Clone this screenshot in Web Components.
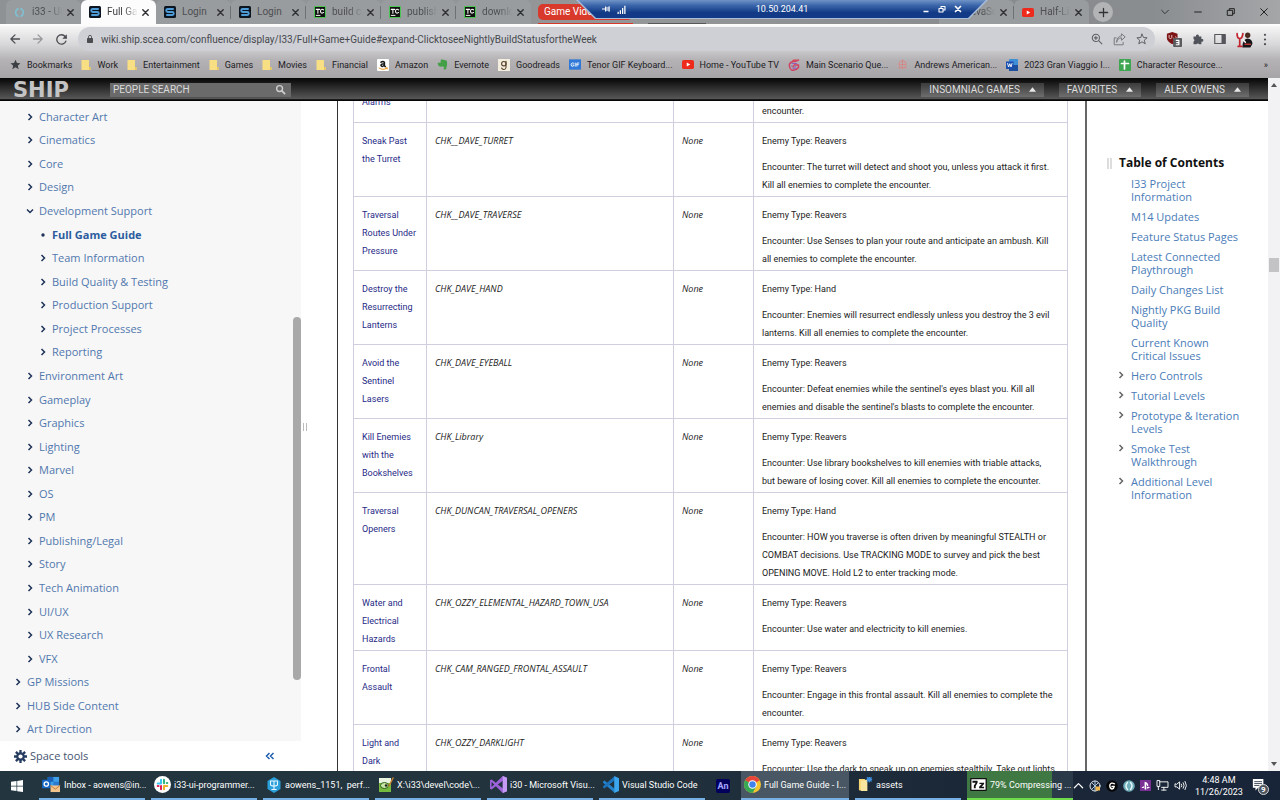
<!DOCTYPE html>
<html lang="en">
<head>
<meta charset="utf-8">
<title>Full Game Guide - I33</title>
<style>
  html, body { margin: 0; height: 100%; }
  body { font-family: "Open Sans", "Noto Sans", sans-serif; font-size: 11px; overflow: hidden; background: #fff; color: #222; }
</style>
</head>
<body>
<app-screen></app-screen>

<script>
const svg = (vb, body, w = 12, h = w) =>
  `<svg viewBox="0 0 ${vb}" width="${w}" height="${h}" fill="none" stroke-linecap="round" stroke-linejoin="round" aria-hidden="true">${body}</svg>`;

const icons = {
  ring: svg('16 16', '<path d="M6 2.5A6 6 0 0 0 6 13.5M10 13.5A6 6 0 0 0 10 2.5" stroke="#7fc0d2" stroke-width="2.2"/>', 11),
  ship: svg('16 16', '<rect width="16" height="16" rx="2" fill="#0c1420"/><path d="M13 4H5Q3 4 3 6T5 8H11Q13 8 13 10T11 12H3" stroke="#4f9bd6" stroke-width="2.6" stroke-linecap="butt"/>', 12),
  tc: svg('16 16', '<rect x=".7" y=".7" width="14.6" height="14.6" rx="1" fill="#111" stroke="#4bc653" stroke-width="1.4"/><path d="M3 4.5H7.5M5.2 4.5V9.5M12.8 5.3Q11.5 4 10 4.5Q8.7 5 8.7 7T10 9.4Q11.5 9.8 12.8 8.6" stroke="#fff" stroke-width="1.4"/><path d="M3 12.5H8" stroke="#fff" stroke-width="1.3"/>', 12),
  yt: svg('16 12', '<rect width="16" height="12" rx="2.5" fill="#ee2a1d"/><path d="M6.3 3.4v5.2L11 6z" fill="#fff"/>', 12, 9),
  x: svg('10 10', '<path d="M2 2l6 6M8 2l-6 6" stroke="currentColor" stroke-width="1.6"/>', 9),
  plus: svg('12 12', '<path d="M6 1.5v9M1.5 6h9" stroke="#333" stroke-width="1.4"/>', 11),
  vee: svg('12 12', '<path d="M2 4l4 4 4-4" stroke="#333" stroke-width="1.2"/>', 10),
  min: svg('12 12', '<path d="M2 6h8" stroke="#222" stroke-width="1.3"/>', 10),
  max: svg('12 12', '<path d="M2 4h6v6H2zM4 4V2h6v6H8" stroke="#222" stroke-width="1.2"/>', 10),
  close: svg('12 12', '<path d="M2 2l8 8M10 2l-8 8" stroke="#222" stroke-width="1.2"/>', 10),
  back: svg('16 16', '<path d="M14 8H2.5M8 2.5L2.5 8 8 13.5" stroke="#4c4d51" stroke-width="1.7"/>', 12),
  fwd: svg('16 16', '<path d="M2 8h11.5M8 2.5L13.5 8 8 13.5" stroke="#96979b" stroke-width="1.7"/>', 12),
  reload: svg('16 16', '<path d="M13.4 10A5.8 5.8 0 1 1 12.5 4.3L13.8 6" stroke="#4c4d51" stroke-width="1.7"/><path d="M14.5 1.5V7H9z" fill="#4c4d51"/>', 13),
  lock: svg('12 14', '<rect x="1.5" y="5.5" width="9" height="7.5" rx="1" fill="#4c4d51"/><path d="M3.7 5.5V3.8a2.3 2.3 0 0 1 4.6 0V5.5" stroke="#4c4d51" stroke-width="1.3"/>', 8, 10),
  zoom: svg('16 16', '<circle cx="6.5" cy="6.5" r="4.8" stroke="#5d5e63" stroke-width="1.4"/><path d="M10.2 10.2L14.5 14.5M4.5 6.5h4M6.5 4.5v4" stroke="#5d5e63" stroke-width="1.4"/>', 12),
  share: svg('16 16', '<path d="M4 6H1.5v8.500h11v-3M4.500 11Q5.5 6 10.5 6V9L15 4.8 10.5 1V3.5Q5 4 4.500 11z" stroke="#77787c" stroke-width="1.2"/>', 13),
  starO: svg('16 16', '<path d="M8 1.5l2 4.5 4.8.4-3.7 3.2 1.2 4.8L8 11.8l-4.3 2.6 1.2-4.8L1.2 6.4 6 6z" stroke="#5d5e63" stroke-width="1.3"/>', 12),
  star: svg('16 16', '<path d="M8 1l2.2 4.8 5 .5-3.8 3.5 1.2 5L8 12.1l-4.6 2.7 1.2-5L.8 6.3l5-.5z" fill="#3c4044"/>', 11),
  shield: svg('18 18', '<path d="M7 1L13 3V8Q13 12 7 15Q1 12 1 8V3z" fill="#7d1416"/><path d="M3.500 5v2.500a1.600 1.600 0 0 0 3 0V5M8.500 8a1.500 1.500 0 1 0 2.500-1.500" stroke="#e6c9c9" stroke-width="1.100"/><rect x="8" y="8" width="10" height="10" rx="1" fill="#5a5b5f"/><path d="M11.500 10.500h3v5h-3M12 13h2.500" stroke="#fff" stroke-width="1.300"/>', 16),
  puzzle: svg('16 16', '<path d="M2 4.500H5.500A1.900 1.900 0 1 1 9 4.500H12.500V8A1.900 1.900 0 1 1 12.500 11.500V15H9.500A1.900 1.900 0 0 0 6 15H2V11.500A1.900 1.900 0 0 0 2 8z" fill="#50535a"/>', 12),
  panel: svg('16 16', '<rect x="1" y="2" width="14" height="12" stroke="#55565b" stroke-width="1.500"/><path d="M10 2h5v12h-5z" fill="#55565b"/>', 12),
  avatar: svg('16 16', '<circle cx="11" cy="4" r="2.500" fill="#4a2b20"/><path d="M6 15.500Q6 8 10.500 7Q15.500 7.500 15.500 12L13.500 15.500z" fill="#16161a"/><path d="M1 2.500Q1 7 3.500 7T6.500 2.500M3.500 7V14M2 14.500H5.500" stroke="#c3242d" stroke-width="1.600"/><path d="M3.800 1v4.500M6.800 8.500l2 2" stroke="#fff" stroke-width="1.400"/><path d="M8.500 12.500h5" stroke="#b93a35" stroke-width="1.400"/>', 17),
  dots: svg('4 14', '<g fill="#4c4d51"><circle cx="2" cy="2" r="1.200"/><circle cx="2" cy="7" r="1.200"/><circle cx="2" cy="12" r="1.200"/></g>', 4, 13),
  folder: svg('10 10', '<path d="M.500 0h7.500v7h1.500v3H.5z" fill="#f9df83"/><path d="M8 7h1.500v3H8z" fill="#e9c75c"/>', 10),
  amazon: svg('12 12', '<rect width="12" height="12" rx="1" fill="#fff"/><path d="M4 3.200Q6 1.700 7.400 3.200V6.800L8.300 7.600M7.300 4.800Q4 4.600 4 6.500Q4.800 8.400 7.300 6.300" stroke="#181818" stroke-width="1.500"/><path d="M2 9Q6 11.800 10 9M8.800 8.800H10.200V10" stroke="#ef9a25" stroke-width="1"/>', 12),
  evernote: svg('12 12', '<path d="M4 .8Q6 0 8 1.200Q10.800 1.500 11 3Q11.500 7 10 10.500Q9 12 7.200 11.300Q6.500 10 8 9.500L8 9Q6.500 9 6 8Q3.500 9 1.500 7Q.8 5 .8 4H3.500Q4 4 4 3.500z" fill="#43a047"/>', 11),
  goodreads: svg('12 12', '<rect width="12" height="12" fill="#f3eedd"/><circle cx="5.800" cy="4.700" r="2.200" stroke="#59432c" stroke-width="1.100"/><path d="M8 2.300V8.500Q7.500 10.800 5.700 10.500Q4 10.400 3.600 9" stroke="#59432c" stroke-width="1.100"/>', 12),
  tenor: svg('14 12', '<rect width="14" height="12" fill="#3179d8"/><path d="M5.500 4.500Q4 3.600 2.800 4.800Q2 6.500 3 7.800Q4.500 8.800 5.500 7.600V6.500H4.500M7.300 4.300V8M9.200 8V4.300H11.500M9.200 6.200H11" stroke="#fff" stroke-width="1"/>', 12, 11),
  rune: svg('12 12', '<path d="M10.500 1L7 2.500Q3 2 1.500 5Q.8 9 3.500 11Q8 11.800 10.500 8.500V6H7.500" stroke="#d0405f" stroke-width="1.500"/><path d="M4 4.500h4.500M3.500 7h4M5 9.200h3" stroke="#8c5fc0" stroke-width="1.200"/><path d="M5 1.500L8 .8M6.500 5.500L5 8" stroke="#d94a55" stroke-width="1.300"/>', 12),
  crest: svg('12 12', '<circle cx="6" cy="6" r="3.800" stroke="#d58d8c" stroke-width="1.300"/><path d="M6 .8v10M3.500 6h5M2 10l2-1M10 10L8 9" stroke="#d28786" stroke-width="1"/>', 11),
  word: svg('12 12', '<rect x="3" width="9" height="12" rx="1" fill="#3f8ed8"/><path d="M3 6h9v6H3z" fill="#1d4f9f"/><rect y="2.500" width="7.500" height="7.500" fill="#1a4eae"/><path d="M1.600 4.500l1 3.500 1.200-3.300L5 8l1-3.500" stroke="#fff" stroke-width=".9"/>', 12),
  sheet: svg('12 12', '<rect width="12" height="12" rx="1" fill="#3ea650"/><path d="M2.500 4.500h7M5.500 2v8" stroke="#fff" stroke-width="1.700"/>', 12),
  search: svg('12 12', '<circle cx="5" cy="5" r="3.200" stroke="#cfcfcf" stroke-width="1.500"/><path d="M7.500 7.500L10.500 10.500" stroke="#cfcfcf" stroke-width="1.900"/>', 11),
  up: svg('8 5', '<path d="M0 5L4 0 8 5z" fill="#e8e8e8"/>', 7, 5),
  chev: svg('8 8', '<path d="M2.500 1L5.500 4 2.500 7" stroke="currentColor" stroke-width="1.500" stroke-linecap="butt" stroke-linejoin="miter"/>', 8),
  chevDown: svg('8 8', '<path d="M1 2.500L4 5.500 7 2.500" stroke="currentColor" stroke-width="1.500" stroke-linecap="butt" stroke-linejoin="miter"/>', 8),
  dot: svg('8 8', '<circle cx="4" cy="4" r="1.700" fill="#1f3358"/>', 8),
  gear: svg('16 16', '<path d="M8 0v16M0 8h16M2.300 2.300l11.400 11.400M13.700 2.300L2.300 13.700" stroke="#263c60" stroke-width="2.800" stroke-linecap="butt"/><circle cx="8" cy="8" r="5.300" fill="#263c60"/><circle cx="8" cy="8" r="2.600" fill="#fff"/>', 13),
  pin: svg('14 10', '<path d="M0 5h5M5 1.500v7M5 3.500h5v3H5zM10 1v8" stroke="#fff" stroke-width="1.500" stroke-linecap="butt"/>', 10, 8),
  signal: svg('12 12', '<path d="M1.500 12V9M4.500 12V7M7.500 12V4M10.500 12V1" stroke="#fff" stroke-width="1.700" stroke-linecap="butt"/>', 9),
  rmin: svg('8 8', '<path d="M1.500 6.500h5" stroke="#fff" stroke-width="1.700" stroke-linecap="butt"/>', 8),
  rmax: svg('8 8', '<path d="M1 3.500h4v3.500H1zM3 3.500V1.500h4V5H5" stroke="#fff" stroke-width="1.100"/>', 8),
  rx: svg('8 8', '<path d="M1.500 1.500l5 5M6.500 1.500l-5 5" stroke="#fff" stroke-width="1.700"/>', 8),
  win: svg('12 12', '<path d="M0 1.800L5.500 1v4.700H0zM6.200.9L12 0v5.700H6.200zM0 6.400h5.500v4.700L0 10.300zM6.200 6.400H12V12l-5.800-.8z" fill="#fff"/>', 12),
  outlook: svg('20 18', '<path d="M6 1h12v10H6z" fill="#3fa0e8"/><path d="M6 1h6v5H6z" fill="#1a5fb4"/><path d="M12 6h6v5h-6z" fill="#2a7bd0"/><rect y="4" width="9" height="9" fill="#1467c4"/><circle cx="4.500" cy="8.500" r="2.300" stroke="#fff" stroke-width="1.400"/><path d="M9 10h10v7H9z" fill="#f3c58d"/><path d="M9 10l5 4 5-4" stroke="#c27a35" stroke-width="1"/>', 19, 17),
  slack: svg('16 16', '<circle cx="8" cy="8" r="8" fill="#fff"/><path d="M6.600 3.500V7" stroke="#36c5f0" stroke-width="1.900"/><path d="M3.500 7h2" stroke="#36c5f0" stroke-width="1.900"/><path d="M9.400 3.500V6.800M12.500 6.600h-.5" stroke="#2eb67d" stroke-width="1.900"/><path d="M9.400 9.400V12.500M9.400 9.400h3.100" stroke="#ecb22e" stroke-width="1.900"/><path d="M6.600 9.500v3M3.500 9.400h.8" stroke="#e01e5a" stroke-width="1.900"/>', 17),
  p4: svg('16 16', '<path d="M8 0l6.500 4v8L8 16l-6.500-4V4z" fill="#2b9fd9"/><path d="M4.500 4v3.500Q4.500 9 8 9T11.500 7.500V4zM8 9v3.500M5.800 12.500h4.400M8 4v5" stroke="#e8f6ff" stroke-width="1.100"/>', 16),
  npp: svg('16 16', '<path d="M1 1h12v14H1z" fill="#e9f3df"/><path d="M1 6h12v9H1z" fill="#75b93e"/><ellipse cx="6.500" cy="8.500" rx="4" ry="3" fill="#c7e7a4" stroke="#2f5f1c"/><circle cx="8" cy="8.500" r="1.200" fill="#222"/><path d="M15 1L11 9" stroke="#c4822f" stroke-width="1.500"/>', 16),
  vs: svg('16 16', '<path d="M12 0L5.500 6.300 1.500 3.300 0 4v8l1.500.7 4-3L12 16l4-1.700V1.700zM1.500 10.300V5.700L4 8zM7.300 8L12 4.400v7.200z" fill="#9c62da" fill-rule="evenodd"/><path d="M12 0l4 1.700v12.600L12 16z" fill="#c49af2"/>', 17),
  vsc: svg('16 16', '<path d="M1 5.200l1.300-1L12 12v4L1 6.300z" fill="#2382cc"/><path d="M1 10.800l1.300 1L12 4V0L1 9.700z" fill="#1c73bb"/><path d="M11.500 0L16 2v12l-4.500 2z" fill="#3ba5ee"/>', 17),
  chrome: svg('16 16', '<circle cx="8" cy="8" r="8" fill="#f4c430"/><path d="M8 8L1.100 4A8 8 0 0 1 14.900 4z" fill="#e5453a"/><path d="M8 8L1.100 4A8 8 0 0 0 8 16L11.500 10z" fill="#37a853"/><circle cx="8" cy="8" r="4" fill="#fff"/><circle cx="8" cy="8" r="3" fill="#3f82ee"/>', 17),
  exp: svg('16 16', '<path d="M1 2h6l2 2v11l-8-1z" fill="#f7d774"/><path d="M3 4l7-1v12H3z" fill="#fbe6a0"/><path d="M9.500 2.500h5M12 0v5M10 .8l4 3.400M14 .8l-4 3.400" stroke="#3f8fe0" stroke-width="1.500"/>', 15),
  zip: svg('18 14', '<rect x=".700" y=".700" width="16.600" height="12.600" fill="#fff" stroke="#111" stroke-width="1.400"/><path d="M2.500 3h5.500v2L6 8.500V11H4V8L6 5H2.500z" fill="#111"/><path d="M10 5h5v1.500L12.300 9.500H15V11H9.700V9.500L12.500 6.500H10z" fill="#111"/>', 17, 13),
  tray1: svg('12 12', '<circle cx="6" cy="6" r="5" stroke="#e8eef2" stroke-width="1"/><path d="M3 3l6 6M9 3L3 9M6 1v10" stroke="#a9c7dd" stroke-width="1"/><rect x="6.500" y="6.500" width="4.500" height="4" fill="#efb84c"/>', 12),
  tray2: svg('12 12', '<circle cx="6" cy="6" r="5.800" fill="#060606"/><path d="M8.500 3.800Q5 2 3.800 5Q3.500 8.500 6 9Q8 8.700 8.300 6.500H6" stroke="#fff" stroke-width="1.300"/>', 12),
  tray3: svg('12 12', '<circle cx="6" cy="6" r="5.800" fill="#71aebb"/><path d="M4.500 2.500Q1.500 6 4.500 9.500M7.500 2.500Q10.500 6 7.500 9.500" stroke="#e8f8fb" stroke-width="1.400"/>', 12),
  tray4: svg('12 12', '<rect width="12" height="12" fill="#7a2f93"/><path d="M5 2v8l1.800.6V4.500Q8.500 5 7.500 6.500Q10 7 8.500 4Q8 2.500 5 2zM4.300 6.800L2 7.800Q1.300 9 4.300 8.800zM7.500 7.500Q11 7 10.500 8.500L7.500 9.500z" fill="#fff"/>', 11),
  tray5: svg('14 12', '<path d="M4 2h9v6H6M8.500 8v3M6 11h5M1 1v6h3V1zM2.500 7v3.500" stroke="#fff" stroke-width="1"/>', 13, 11),
  tray6: svg('14 12', '<path d="M1 4.500v3h2L6 10V2L3 4.500z" stroke="#fff" stroke-width="1"/><path d="M8 4.500q1 1.500 0 3M10 3q2 3 0 6M12 1.500q3 4.500 0 9" stroke="#fff" stroke-width="1"/>', 13, 11),
  trayUp: svg('12 12', '<path d="M1.500 8.500L6 4l4.500 4.500" stroke="#fff" stroke-width="1.300"/>', 11),
  note: svg('16 16', '<path d="M1 0h12v10H7l-3 3v-3H1z" fill="#fff"/><path d="M3 3h8M3 5.200h8M3 7.400h5" stroke="#1a2838" stroke-width=".9"/>', 14),
};

const define = (name, css, render) => customElements.define(name, class extends HTMLElement {
  connectedCallback() {
    if (this.shadowRoot) return;
    const t = document.createElement('template');
    t.innerHTML = `<style>*{box-sizing:border-box}svg{display:block;flex:none}button{font:inherit;color:inherit;border:0;background:none;padding:0;margin:0}a{color:inherit;text-decoration:none}${css}</style>${render(this)}`;
    this.attachShadow({ mode: 'open' }).append(t.content.cloneNode(true));
  }
});
const iconOf = el => icons[el.getAttribute('icon')] || '';

/* Browser frame */
define('browser-tab', `
  :host { display: flex; align-items: center; flex: none; width: 75px; height: 24px; padding: 0 6px 0 8px; color: #4d4f52; background: #999c9e; border-radius: 6px 6px 0 0; }
  :host([active]) { background: #fcfcfd; color: #3b3b3f; }
  .icon { width: 18px; flex: none; }
  .title { flex: 1; overflow: hidden; white-space: nowrap; line-height: 16px; mask-image: linear-gradient(90deg, #000 50%, transparent 90%); }
  :host([whole]) .title { mask-image: none; }
  button { display: flex; color: #2f3033; }
  i { width: 1px; height: 13px; background: #6e7073; margin: 0 -6px 0 5px; }
`, el => `<span class="icon">${iconOf(el)}</span><span class="title"><slot></slot></span><button aria-label="Close tab">${icons.x}</button>${el.hasAttribute('sep') ? '<i></i>' : ''}`);

define('tab-strip', `
  :host { display: flex; align-items: center; height: 24px; padding-left: 6px; background: linear-gradient(90deg, #8f9294, #949698 50%, #888a8e 80%, #8a8d90 90%, #a4a6a8); font-family: Roboto, sans-serif; font-size: 10px; }
  .chip { align-self: stretch; width: 95px; margin-left: 7px; border-bottom: 1px solid #d8382a; }
  .chip span { display: block; height: 16px; margin: 4px 0 0; padding-left: 6px; line-height: 16px; border-radius: 5px; background: #d8392a; color: #fff; white-space: nowrap; }
  .group { align-self: stretch; width: 58px; margin-left: 15px; border-bottom: 1px solid #55575b; }
  .space { flex: 1; }
  .new { width: 20px; height: 20px; margin: 0 47px 0 4px; border-radius: 50%; background: #b2b4b6; display: grid; place-items: center; }
  .win { display: flex; gap: 23px; padding-right: 11px; }
  .win button { display: flex; }
`, () => `
  <browser-tab icon="ring">i33 - UI</browser-tab>
  <browser-tab icon="ship" active>Full Gam</browser-tab>
  <browser-tab icon="ship" whole sep>Login</browser-tab>
  <browser-tab icon="ship" whole sep>Login</browser-tab>
  <browser-tab icon="tc" sep>build co</browser-tab>
  <browser-tab icon="tc" sep>publish</browser-tab>
  <browser-tab icon="tc">downlo</browser-tab>
  <div class="chip"><span>Game Video</span></div><div class="group"></div>
  <div class="space"></div>
  <browser-tab icon="yt" sep>JavaScr</browser-tab>
  <browser-tab icon="yt">Half-Lif</browser-tab>
  <button class="new" aria-label="New tab">${icons.plus}</button>
  <div class="win">${['vee', 'min', 'max', 'close'].map(n => `<button aria-label="${n}">${icons[n]}</button>`).join('')}</div>`);

define('remote-bar', `
  :host { position: absolute; top: 0; left: 45%; width: 412px; height: 19px; background: #a9bcd8; clip-path: polygon(0 0, 100% 0, 393px 100%, 19px 100%); font-family: Roboto, sans-serif; }
  .bar { display: flex; align-items: center; height: 18px; padding: 0 26px 0 26px; background: linear-gradient(#7094c6, #3b66ab 30%, #123a86 70%, #123a86); color: #fff; font-size: 9px; clip-path: polygon(2px 0, 410px 0, 392px 100%, 20px 100%); }
  .bar > span { flex: 1; padding-left: 24px; text-align: center; line-height: 16px; }
  button { display: flex; margin-left: 8px; }
  .pin { margin: 0 5px 0 0; }
`, () => `<div class="bar"><button class="pin" aria-label="Pin">${icons.pin}</button>${icons.signal}<span>10.50.204.41</span><button aria-label="Minimize">${icons.rmin}</button><button aria-label="Restore">${icons.rmax}</button><button aria-label="Close">${icons.rx}</button></div>`);

define('address-bar', `
  :host { display: flex; align-items: center; height: 28px; padding: 0 13px 0 9px; gap: 11px; font-family: Roboto, sans-serif; }
  button { display: flex; }
  .pill { flex: 1; display: flex; align-items: center; height: 24px; margin-left: -1px; padding: 0 7px 0 8px; gap: 7px; border-radius: 12px; background: #ced0d6; }
  input { flex: 1; min-width: 0; border: 0; padding: 0; background: none; font: inherit; font-size: 10px; color: #47484c; height: 18px; outline: 0; }
  .acts { display: flex; align-items: center; gap: 10px; }
  .ext { display: flex; align-items: center; gap: 10px; }
`, () => `
  <button aria-label="Back">${icons.back}</button><button aria-label="Forward">${icons.fwd}</button><button aria-label="Reload">${icons.reload}</button>
  <div class="pill">${icons.lock}<input aria-label="Address" value="wiki.ship.scea.com/confluence/display/I33/Full+Game+Guide#expand-ClicktoseeNightlyBuildStatusfortheWeek">
  <div class="acts"><button aria-label="Zoom">${icons.zoom}</button><button aria-label="Share">${icons.share}</button><button aria-label="Bookmark">${icons.starO}</button></div></div>
  <div class="ext">${['shield', 'puzzle', 'panel', 'avatar', 'dots'].map(n => `<button aria-label="${n}">${icons[n]}</button>`).join('')}</div>`);

define('bookmark-link', `
  :host { display: block; }
  a { display: flex; align-items: center; gap: 6px; line-height: 16px; white-space: nowrap; }
`, el => `<a href="#">${iconOf(el)}<slot></slot></a>`);

define('bookmark-bar', `
  :host { display: flex; align-items: center; justify-content: space-between; height: 26px; padding: 0 12px 1px 10px; font-family: Roboto, sans-serif; font-size: 9px; color: #1c1c1f; }
  button { margin-left: 32px; }
`, () => [['star', 'Bookmarks'], ['folder', 'Work'], ['folder', 'Entertainment'], ['folder', 'Games'], ['folder', 'Movies'], ['folder', 'Financial'], ['amazon', 'Amazon'], ['evernote', 'Evernote'], ['goodreads', 'Goodreads'], ['tenor', 'Tenor GIF Keyboard...'], ['yt', 'Home - YouTube TV'], ['rune', 'Main Scenario Que...'], ['crest', 'Andrews American...'], ['word', '2023 Gran Viaggio I...'], ['sheet', 'Character Resource...']]
  .map(([i, t]) => `<bookmark-link icon="${i}">${t}</bookmark-link>`).join('') + '<button aria-label="More bookmarks">»</button>');

/* Wiki page */
define('site-menu', `
  :host { display: block; }
  button { display: flex; align-items: center; gap: 9px; height: 14px; padding: 0 8px; background: linear-gradient(#3b3b3b, #6e6e6e); color: #dedede; line-height: 14px; white-space: nowrap; }
`, () => `<button><slot></slot>${icons.up}</button>`);

define('site-header', `
  :host { display: flex; align-items: center; height: 23px; padding: 0 19px 0 13px; background: linear-gradient(#050505, #2a2a2a 40%, #585858 92%, #050505 94%); font-family: Roboto, sans-serif; font-size: 10px; }
  .logo { width: 97px; font: bold 21px/20px "DejaVu Sans", sans-serif; color: #c4c4c4; }
  .search { display: flex; align-items: center; width: 181px; height: 14px; padding: 0 5px 0 3px; background: #6a6a6a; }
  input { flex: 1; min-width: 0; height: 14px; padding: 0; border: 0; background: none; font: inherit; color: #dadada; }
  input::placeholder { color: #dadada; }
  .space { flex: 1; }
  nav { display: flex; gap: 15px; }
`, () => `<a class="logo" href="#">SHIP</a><label class="search"><input type="text" aria-label="People search" placeholder="PEOPLE SEARCH">${icons.search}</label><div class="space"></div><nav><site-menu>INSOMNIAC GAMES</site-menu><site-menu>FAVORITES</site-menu><site-menu>ALEX OWENS</site-menu></nav>`);

define('tree-item', `
  :host { display: flex; align-items: center; flex: 1; min-height: 0; padding-left: 14px; color: #5178ae; }
  :host([level="2"]) { padding-left: 26px; }
  :host([level="3"]) { padding-left: 39px; }
  :host([current]) { font-weight: bold; color: #2c5c9e; }
  button { display: flex; color: #1f3358; margin-right: 5px; }
  a { line-height: 16px; }
`, el => `<button aria-label="Expand">${icons[el.getAttribute('icon') || 'chev']}</button><a href="#"><slot></slot></a>`);

define('page-tree', `
  :host { position: relative; display: flex; flex-direction: column; width: 301px; flex: none; background: #fff; }
  nav { flex: 1; min-height: 0; display: flex; flex-direction: column; padding: 4px 0 0; background: #f7f7f7; }
  .thumb { position: absolute; right: 0; top: 216px; height: 363px; width: 8px; border-radius: 4px; background: #a9a9aa; }
  footer { display: flex; align-items: center; justify-content: space-between; height: 30px; padding: 0 26px 0 14px; color: #44546f; }
  .tools { display: flex; align-items: center; gap: 3px; line-height: 16px; }
  .fold { display: flex; color: #1d5fae; }
`, () => {
  const it = (l, t, extra = '') => `<tree-item level="${l}" ${extra}>${t}</tree-item>`;
  return `<nav aria-label="Pages">
    ${['Character Art', 'Cinematics', 'Core', 'Design'].map(t => it(2, t)).join('')}
    ${it(2, 'Development Support', 'icon="chevDown"')}
    ${it(3, 'Full Game Guide', 'icon="dot" current')}
    ${['Team Information', 'Build Quality &amp; Testing', 'Production Support', 'Project Processes', 'Reporting'].map(t => it(3, t)).join('')}
    ${['Environment Art', 'Gameplay', 'Graphics', 'Lighting', 'Marvel', 'OS', 'PM', 'Publishing/Legal', 'Story', 'Tech Animation', 'UI/UX', 'UX Research', 'VFX'].map(t => it(2, t)).join('')}
    ${['GP Missions', 'HUB Side Content', 'Art Direction'].map(t => it(1, t)).join('')}
  </nav><div class="thumb"></div>
  <footer><button class="tools">${icons.gear}Space tools</button><button class="fold" aria-label="Collapse sidebar"><svg viewBox="0 0 10 8" width="10" height="8" fill="none"><path d="M4.500 1L1.500 4l3 3M8.500 1L5.500 4l3 3" stroke="#1d5fae" stroke-width="1.500"/></svg></button></footer>`;
});

const levels = [
  ['Sneak Past the Turret', 'CHK__DAVE_TURRET', 'Reavers', 'The turret will detect and shoot you, unless you attack it first. Kill all enemies to complete the encounter.'],
  ['Traversal Routes Under Pressure', 'CHK__DAVE_TRAVERSE', 'Reavers', 'Use Senses to plan your route and anticipate an ambush. Kill all enemies to complete the encounter.'],
  ['Destroy the Resurrecting Lanterns', 'CHK_DAVE_HAND', 'Hand', 'Enemies will resurrect endlessly unless you destroy the 3 evil lanterns. Kill all enemies to complete the encounter.'],
  ['Avoid the Sentinel Lasers', 'CHK_DAVE_EYEBALL', 'Reavers', "Defeat enemies while the sentinel's eyes blast you. Kill all enemies and disable the sentinel's blasts to complete the encounter."],
  ['Kill Enemies with the Bookshelves', 'CHK_Library', 'Reavers', 'Use library bookshelves to kill enemies with triable attacks, but beware of losing cover. Kill all enemies to complete the encounter.'],
  ['Traversal Openers', 'CHK_DUNCAN_TRAVERSAL_OPENERS', 'Hand', 'HOW you traverse is often driven by meaningful STEALTH or COMBAT decisions. Use TRACKING MODE to survey and pick the best OPENING MOVE. Hold L2 to enter tracking mode.'],
  ['Water and Electrical Hazards', 'CHK_OZZY_ELEMENTAL_HAZARD_TOWN_USA', 'Reavers', 'Use water and electricity to kill enemies.'],
  ['Frontal Assault', 'CHK_CAM_RANGED_FRONTAL_ASSAULT', 'Reavers', 'Engage in this frontal assault. Kill all enemies to complete the encounter.'],
  ['Light and Dark', 'CHK_OZZY_DARKLIGHT', 'Reavers', 'Use the dark to sneak up on enemies stealthily. Take out lights'],
];

define('level-table', `
  :host { display: block; flex: 1; min-width: 0; margin-left: 36px; padding: 0 17px 0 15px; border-left: 1px solid #333; border-right: 2px solid #666; overflow: hidden; }
  table { width: 100%; margin-top: -8px; table-layout: fixed; border-collapse: collapse; font-family: Roboto, sans-serif; font-size: 9px; line-height: 18px; }
  em { font-family: "Open Sans", sans-serif; }
  col.name { width: 73px; } col.id { width: 247px; } col.tag { width: 80px; }
  th, td { border: 1px solid #cfcfe0; padding: 9px 8px 2px; text-align: left; vertical-align: top; font-weight: normal; }
  td:last-child { padding-right: 11px; }
  th a { color: #1f2a86; }
  .cut > * { vertical-align: bottom; padding-top: 0; border-top: 0; }
  .cut th { padding-bottom: 11px; }
  p { margin: 0; } p + p { margin-top: 8px; }
`, () => `<table><colgroup><col class="name"><col class="id"><col class="tag"><col></colgroup><tbody>
  <tr class="cut"><th scope="row"><a href="#">Alarms</a></th><td></td><td></td><td>encounter.</td></tr>
  ${levels.map(([n, id, e, d]) => `<tr><th scope="row"><a href="#">${n}</a></th><td><em>${id}</em></td><td><em>None</em></td><td><p>Enemy Type: ${e}</p><p>Encounter: ${d}</p></td></tr>`).join('')}
  </tbody></table>`);

define('toc-panel', `
  :host { display: block; width: 181px; flex: none; padding: 52px 24px 0 20px; color: #4a7cb8; }
  h2 { display: flex; align-items: center; gap: 7px; margin: 0 0 4px; font-size: 12px; line-height: 20px; color: #111; white-space: nowrap; }
  h2 i { width: 5px; height: 11px; border: solid #ddd; border-width: 0 2px; }
  ul { list-style: none; margin: 0; padding: 0; display: flex; flex-direction: column; gap: 7px; line-height: 13px; }
  li { display: flex; }
  li span { width: 24px; flex: none; padding: 2px 0 0 10px; color: #666; }
`, () => `<h2><i></i>Table of Contents</h2><ul>
  ${['I33 Project Information', 'M14 Updates', 'Feature Status Pages', 'Latest Connected Playthrough', 'Daily Changes List', 'Nightly PKG Build Quality', 'Current Known Critical Issues'].map(t => `<li><span></span><a href="#">${t}</a></li>`).join('')}
  ${['Hero Controls', 'Tutorial Levels', 'Prototype &amp; Iteration Levels', 'Smoke Test Walkthrough', 'Additional Level Information'].map(t => `<li><span>${icons.chev}</span><a href="#">${t}</a></li>`).join('')}</ul>`);

define('page-scrollbar', `
  :host { display: flex; flex-direction: column; align-items: center; justify-content: space-between; width: 12px; flex: none; padding: 5px 0; background: #f2f1f4; position: relative; }
  .thumb { position: absolute; top: 26%; left: 1px; width: 10px; height: 14px; background: #c3c2c5; }
`, () => `<svg viewBox="0 0 6 4" width="6" height="4"><path d="M0 4L3 0 6 4z" fill="#555"/></svg><div class="thumb"></div><svg viewBox="0 0 6 4" width="6" height="4"><path d="M0 0L3 4 6 0z" fill="#555"/></svg>`);

/* Desktop taskbar */
define('task-button', `
  :host { display: block; flex: none; width: 106px; height: 29px; border-bottom: 2px solid #76b0e4; }
  :host([active]) { width: 108px; background: #485763; }
  :host([busy]) { border-color: #6fdc4a; background: linear-gradient(90deg, #3f7843 80%, #2b3a49 80%); }
  button { display: flex; align-items: center; gap: 3px; width: 100%; height: 27px; padding: 0 3px; color: #fff; line-height: 16px; white-space: pre; text-align: left; }
`, el => `<button>${iconOf(el)}<span><slot></slot></span></button>`);

define('task-bar', `
  :host { display: flex; align-items: center; flex: none; height: 29px; background: linear-gradient(90deg, #233640, #22333d 45%, #1b2838 75%, #182438); color: #fff; font-family: Roboto, sans-serif; font-size: 9px; }
  .start { display: flex; justify-content: center; flex: none; width: 33px; margin-right: 6px; }
  .apps { display: flex; gap: 6px; flex: none; }
  .an { align-self: center; width: 14px; height: 14px; margin: 0 5px; border-radius: 2px; background: #00005c; color: #a6a6ff; line-height: 14px; text-align: center; font-weight: bold; }
  .space { flex: 1; }
  .tray { display: flex; align-items: center; gap: 5px; margin-right: 8px; }
  time { text-align: center; line-height: 12px; white-space: nowrap; }
  .note { position: relative; margin: 0 15px 0 9px; }
  .note b { position: absolute; left: 6px; top: 5px; width: 11px; height: 11px; border-radius: 50%; background: #4c545e; border: 1px solid #d6d6d6; line-height: 9px; text-align: center; font-size: 8px; }
`, () => `
  <button class="start" aria-label="Start">${icons.win}</button>
  <div class="apps">
    <task-button icon="outlook">Inbox - aowens@in...</task-button>
    <task-button icon="slack">i33-ui-programmer...</task-button>
    <task-button icon="p4">aowens_1151,  perf...</task-button>
    <task-button icon="npp">X:\\i33\\devel\\code\\...</task-button>
    <task-button icon="vs">i30 - Microsoft Visu...</task-button>
    <task-button icon="vsc">Visual Studio Code</task-button>
    <button class="an">An</button>
    <task-button icon="chrome" active>Full Game Guide - I...</task-button>
    <task-button icon="exp">assets</task-button>
    <task-button icon="zip" busy>79% Compressing ...</task-button>
  </div>
  <div class="space"></div>
  <div class="tray">${['trayUp', 'tray1', 'tray2', 'tray3', 'tray4', 'tray5', 'tray6'].map(n => icons[n]).join('')}</div>
  <time>4:48 AM<br>11/26/2023</time>
  <button class="note" aria-label="Notifications">${icons.note}<b>9</b></button>`);

define('app-screen', `
  :host { display: flex; flex-direction: column; height: 100vh; }
  .chrome { flex: none; background: linear-gradient(#f6f6f7, #d8d8da 35%, #b4b2b5 65%, #a6a4a7); border-top: 2px solid #fcfcfd; }
  address-bar { margin-top: -1px; } bookmark-bar { margin-top: -1px; }
  main { flex: 1; min-height: 0; display: flex; }
  .body { flex: 1; min-width: 0; display: flex; flex-direction: column; }
  .cols { flex: 1; min-height: 0; display: flex; position: relative; }
  .grip { position: absolute; left: 303px; top: 48%; width: 4px; height: 8px; border: solid #bbb; border-width: 0 1px; }
`, () => `
  <tab-strip></tab-strip><remote-bar></remote-bar>
  <div class="chrome"><address-bar></address-bar><bookmark-bar></bookmark-bar></div>
  <main><div class="body"><site-header></site-header><div class="cols"><page-tree></page-tree><div class="grip"></div><level-table></level-table><toc-panel></toc-panel></div></div><page-scrollbar></page-scrollbar></main>
  <task-bar></task-bar>`);
</script>
</body>
</html>
